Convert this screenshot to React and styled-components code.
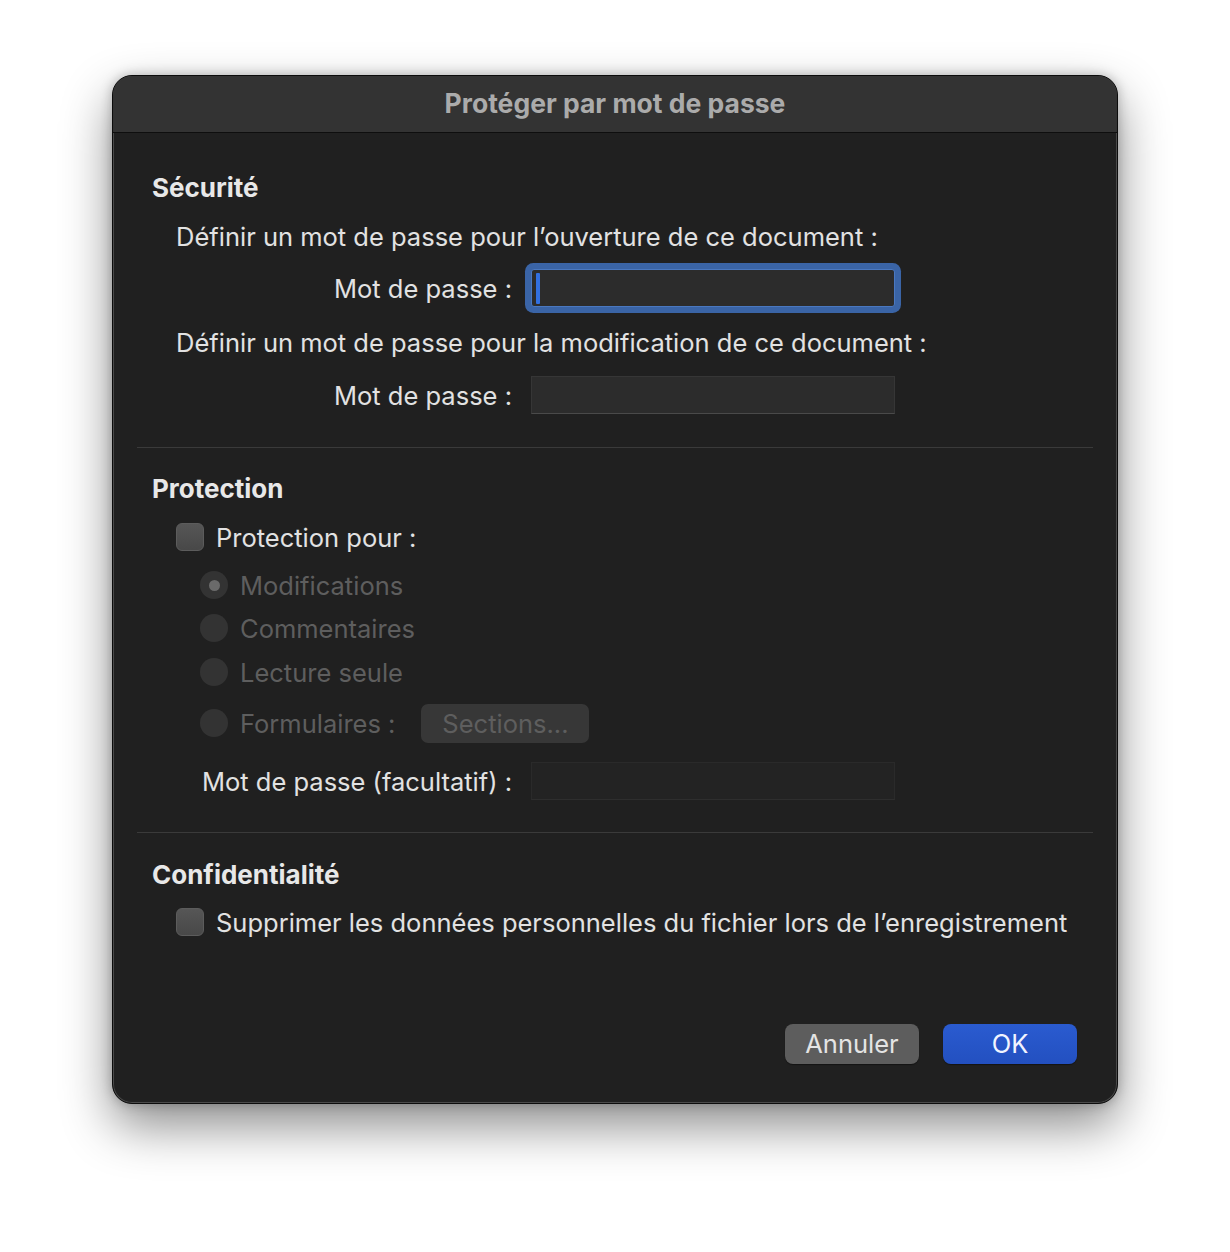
import React from "react";
import styled, { createGlobalStyle } from "styled-components";

const GlobalStyle = createGlobalStyle`
    html, body {
        margin: 0;
        padding: 0;
        background: #ffffff;
    }
    body {
        font-family: Inter, "Noto Sans", "Liberation Sans", sans-serif;
        -webkit-font-smoothing: antialiased;
    }
`;

const Page = styled.div`
    width: 1230px;
    height: 1252px;
    padding-top: 75px;
    box-sizing: border-box;
`;

const Window = styled.div`
    width: 1006px;
    height: 1029px;
    margin: 0 auto;
    box-sizing: border-box;
    border-radius: 20px;
    background: #202020;
    border: 1px solid #0c0c0c;
    box-shadow: inset 0 0 0 1px #4a4a4a, 0 22px 50px rgba(0, 0, 0, 0.45), 0 0 12px rgba(0, 0, 0, 0.25);
    overflow: hidden;
    display: flex;
    flex-direction: column;
`;

const TitleBar = styled.div`
    height: 57px;
    flex-shrink: 0;
    display: flex;
    align-items: center;
    justify-content: center;
    padding-bottom: 2px;
    background: #333333;
    border-bottom: 1px solid #0e0e0e;
    box-sizing: border-box;
    color: #ababab;
    font-size: 26.5px;
    font-weight: 700;
`;

const Body = styled.div`
    flex: 1;
    padding: 35px 24px 40px 39px;
    display: flex;
    flex-direction: column;
    color: #e2e2e2;
    font-size: 25.5px;
`;

const Row = styled.div`
    height: 38px;
    margin-top: ${(p) => p.$mt || 0}px;
    padding-left: ${(p) => p.$indent || 0}px;
    display: flex;
    align-items: center;
    flex-shrink: 0;
    white-space: nowrap;
`;

const Heading = styled(Row)`
    font-weight: 700;
    font-size: 26px;
    color: #e8e8e8;
`;

const FieldRow = styled(Row)`
    display: grid;
    grid-template-columns: 360px 364px;
    column-gap: 19px;
    align-items: center;
    padding-left: 0;
`;

const FieldLabel = styled.div`
    text-align: right;
    color: #e2e2e2;
`;

const Input = styled.div`
    height: 38px;
    box-sizing: border-box;
    background: ${(p) => (p.$disabled ? "#232323" : "#2c2c2c")};
    border: 1px solid ${(p) => (p.$disabled ? "#2a2a2a" : "#363636")};
    border-bottom-color: ${(p) => (p.$disabled ? "#2e2e2e" : "#4a4a4a")};
    position: relative;
    ${(p) =>
        p.$focused &&
        `
        box-shadow: 0 0 0 6px #3a64a6;
        border-radius: 3px;
        border-color: #4a78c0;
    `}
`;

const Caret = styled.span`
    position: absolute;
    left: 4px;
    top: 3px;
    width: 4px;
    height: 31px;
    background: #3270e0;
    border-radius: 1px;
`;

const Divider = styled.div`
    height: 1px;
    background: #3a3a3a;
    margin: ${(p) => p.$mt}px 0 0 -15px;
    flex-shrink: 0;
`;

const Checkbox = styled.span`
    width: 28px;
    height: 28px;
    box-sizing: border-box;
    border-radius: 6px;
    background: linear-gradient(#565656, #484848);
    border: 1px solid #5c5c5c;
    margin-right: 12px;
    flex-shrink: 0;
`;

const Radio = styled.span`
    width: 28px;
    height: 28px;
    border-radius: 50%;
    background: #333333;
    margin-right: 12px;
    flex-shrink: 0;
    display: flex;
    align-items: center;
    justify-content: center;
    &::after {
        content: "";
        display: ${(p) => (p.$checked ? "block" : "none")};
        width: 11px;
        height: 11px;
        border-radius: 50%;
        background: #6a6a6a;
    }
`;

const Disabled = styled.span`
    color: #5e5e5e;
`;

const SectionsButton = styled.span`
    margin-left: 26px;
    width: 168px;
    height: 39px;
    border-radius: 7px;
    background: #373737;
    color: #5e5e5e;
    display: flex;
    align-items: center;
    justify-content: center;
`;

const Footer = styled.div`
    margin-top: 83px;
    padding-right: 16px;
    display: flex;
    justify-content: flex-end;
    gap: 24px;
`;

const Button = styled.button`
    width: 134px;
    height: 40px;
    border-radius: 8px;
    border: none;
    font-family: inherit;
    font-size: 25.5px;
    color: ${(p) => (p.$primary ? "#f2f4ff" : "#e4e4e4")};
    background: ${(p) => (p.$primary ? "linear-gradient(#2a5bd0, #2350c0)" : "#5d5d5d")};
    box-shadow: 0 1px 1px rgba(0, 0, 0, 0.4);
    padding: 0 0 2px;
`;

export default function App() {
    return (
        <>
            <GlobalStyle />
            <Page>
                <Window>
                    <TitleBar>Protéger par mot de passe</TitleBar>
                    <Body>
                        <Heading>Sécurité</Heading>
                        <Row $mt={11} $indent={24}>
                            Définir un mot de passe pour l’ouverture de ce document :
                        </Row>
                        <FieldRow $mt={14}>
                            <FieldLabel>Mot de passe :</FieldLabel>
                            <Input $focused>
                                <Caret />
                            </Input>
                        </FieldRow>
                        <Row $mt={16} $indent={24}>
                            Définir un mot de passe pour la modification de ce document :
                        </Row>
                        <FieldRow $mt={15}>
                            <FieldLabel>Mot de passe :</FieldLabel>
                            <Input />
                        </FieldRow>

                        <Divider $mt={33} />

                        <Heading $mt={21}>Protection</Heading>
                        <Row $mt={11} $indent={24}>
                            <Checkbox />
                            Protection pour :
                        </Row>
                        <Row $mt={10} $indent={48}>
                            <Radio $checked />
                            <Disabled>Modifications</Disabled>
                        </Row>
                        <Row $mt={5} $indent={48}>
                            <Radio />
                            <Disabled>Commentaires</Disabled>
                        </Row>
                        <Row $mt={6} $indent={48}>
                            <Radio />
                            <Disabled>Lecture seule</Disabled>
                        </Row>
                        <Row $mt={13} $indent={48}>
                            <Radio />
                            <Disabled>Formulaires :</Disabled>
                            <SectionsButton>Sections...</SectionsButton>
                        </Row>
                        <FieldRow $mt={20}>
                            <FieldLabel>Mot de passe (facultatif) :</FieldLabel>
                            <Input $disabled />
                        </FieldRow>

                        <Divider $mt={32} />

                        <Heading $mt={22}>Confidentialité</Heading>
                        <Row $mt={10} $indent={24}>
                            <Checkbox />
                            Supprimer les données personnelles du fichier lors de l’enregistrement
                        </Row>

                        <Footer>
                            <Button>Annuler</Button>
                            <Button $primary>OK</Button>
                        </Footer>
                    </Body>
                </Window>
            </Page>
        </>
    );
}
